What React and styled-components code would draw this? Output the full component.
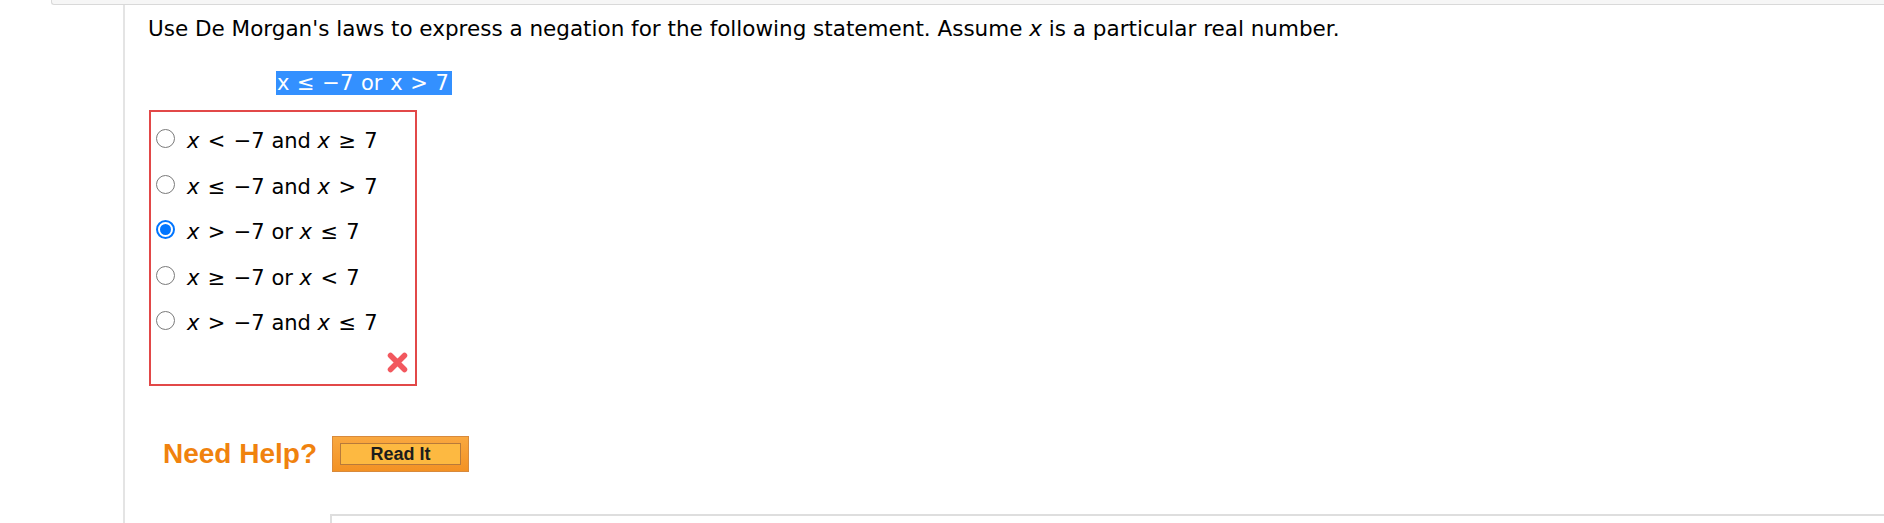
import React from 'react';
import styled, { createGlobalStyle } from 'styled-components';

const GlobalStyle = createGlobalStyle`
  html, body {
    margin: 0;
    padding: 0;
    background: #fff;
    overflow: hidden;
  }
  body {
    font-family: "DejaVu Sans", Verdana, sans-serif;
    color: #000;
  }
`;

const Page = styled.div`
  width: 1884px;
  height: 523px;
  display: flex;
  flex-direction: column;
`;

const TopBar = styled.div`
  margin-left: 51px;
  height: 4px;
  background: #f6f6f6;
  border: 1px solid #d9d9d9;
  border-top: none;
  border-right: none;
  border-bottom-left-radius: 3px;
  flex-shrink: 0;
`;

const Main = styled.div`
  flex: 1;
  margin-left: 123px;
  border-left: 2px solid #e4e4e4;
  padding: 12px 0 0 23px;
`;

const Question = styled.p`
  margin: 0;
  font-size: 21.5px;
  line-height: 24px;
  white-space: nowrap;
`;

const Var = styled.i`
  font-style: italic;
`;

const Rel = styled.span`
  padding: 0 0.08em;
`;

const Statement = styled.div`
  margin: 30px 0 0 128px;
  font-size: 21px;
  line-height: 24px;
`;

const Selected = styled.span`
  display: inline-block;
  background: #3390ff;
  color: #fff;
  padding: 0 3px 0 1px;
  word-spacing: 1px;
`;

const OptionsBox = styled.div`
  margin: 15px 0 0 1px;
  width: 268px;
  height: 276px;
  box-sizing: border-box;
  border: 2px solid #e24848;
  padding: 17px 6px 0 5px;
  display: flex;
  flex-direction: column;
`;

const OptionList = styled.div`
  display: flex;
  flex-direction: column;
  gap: 21.6px;
`;

const Option = styled.label`
  display: flex;
  align-items: flex-start;
  gap: 12px;
  font-size: 21px;
  line-height: 24px;
  white-space: nowrap;
`;

const Radio = styled.span`
  width: 19px;
  height: 19px;
  box-sizing: border-box;
  border-radius: 50%;
  border: ${({ $checked }) => ($checked ? '2px solid #0075ff' : '1.5px solid #7a7a7a')};
  background: #fff;
  flex-shrink: 0;
  display: flex;
  align-items: center;
  justify-content: center;

  &::after {
    content: '';
    width: 11px;
    height: 11px;
    border-radius: 50%;
    background: ${({ $checked }) => ($checked ? '#0075ff' : 'transparent')};
  }
`;

const WrongMark = styled.div`
  margin-top: auto;
  margin-bottom: 10px;
  align-self: flex-end;
  display: flex;
`;

const HelpRow = styled.div`
  margin: 50px 0 0 15px;
  display: flex;
  align-items: center;
  gap: 15px;
`;

const HelpLabel = styled.span`
  font-family: "Liberation Sans", Arial, sans-serif;
  font-weight: bold;
  font-size: 28px;
  color: #f0820e;
`;

const ReadButton = styled.button`
  width: 137px;
  height: 36px;
  padding: 6px 7px;
  box-sizing: border-box;
  background: linear-gradient(#f9a840, #f39224);
  border: 1px solid #d88a3c;
  display: flex;
  cursor: pointer;
`;

const ReadInner = styled.span`
  flex: 1;
  background: #fdb941;
  border: 1px solid #b87a3a;
  display: flex;
  align-items: center;
  justify-content: center;
  font-family: "Liberation Sans", Arial, sans-serif;
  font-weight: bold;
  font-size: 18px;
  color: #1c1c1c;
`;

const BottomPanel = styled.div`
  margin: 42px 0 0 182px;
  height: 40px;
  border-top: 2px solid #dedede;
  border-left: 2px solid #dedede;
`;

const RedX = () => (
  <svg width="23" height="23" viewBox="0 0 23 23">
    <path d="M4.5 4.5 L18.5 18.5 M18.5 4.5 L4.5 18.5" stroke="#f2585e" strokeWidth="5.5" strokeLinecap="round" />
  </svg>
);

const options = [
  { id: 1, parts: ['<', '−7 and', '≥', '7'] },
  { id: 2, parts: ['≤', '−7 and', '>', '7'] },
  { id: 3, parts: ['>', '−7 or', '≤', '7'], checked: true },
  { id: 4, parts: ['≥', '−7 or', '<', '7'] },
  { id: 5, parts: ['>', '−7 and', '≤', '7'] },
];

const App = () => {
  return (
    <Page>
      <GlobalStyle />
      <TopBar />
      <Main>
        <Question>
          Use De Morgan's laws to express a negation for the following statement. Assume <Var>x</Var> is a particular real number.
        </Question>
        <Statement>
          <Selected>x ≤ −7 or x &gt; 7</Selected>
        </Statement>
        <OptionsBox>
          <OptionList>
            {options.map((o) => (
              <Option key={o.id}>
                <Radio $checked={o.checked} />
                <span>
                  <Var>x</Var> <Rel>{o.parts[0]}</Rel> {o.parts[1]} <Var>x</Var> <Rel>{o.parts[2]}</Rel> {o.parts[3]}
                </span>
              </Option>
            ))}
          </OptionList>
          <WrongMark>
            <RedX />
          </WrongMark>
        </OptionsBox>
        <HelpRow>
          <HelpLabel>Need Help?</HelpLabel>
          <ReadButton>
            <ReadInner>Read It</ReadInner>
          </ReadButton>
        </HelpRow>
        <BottomPanel />
      </Main>
    </Page>
  );
};

export default App;
